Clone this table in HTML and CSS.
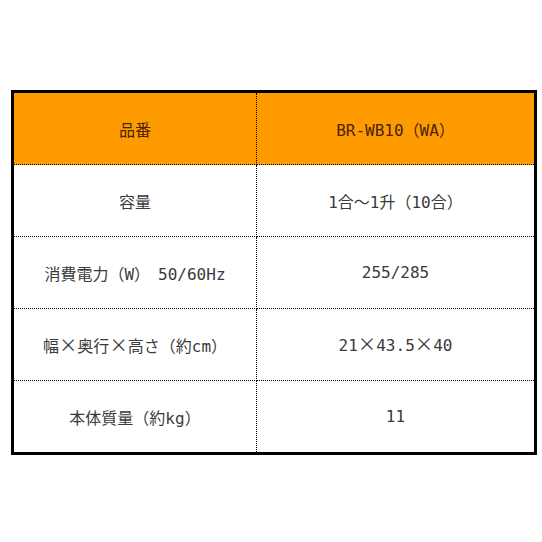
FILE: index.html
```html
<!DOCTYPE html>
<html lang="ja">
<head>
<meta charset="utf-8">
<link rel="stylesheet" href="styles.css">
</head>
<body>
<table class="spec">
  <tr class="head"><td class="c1">品番</td><td class="c2">BR-WB10（WA）</td></tr>
  <tr><td class="c1">容量</td><td class="c2">1合～1升（10合）</td></tr>
  <tr><td class="c1">消費電力（W）　50/60Hz</td><td class="c2">255/285</td></tr>
  <tr><td class="c1">幅<span class="x">×</span>奥行<span class="x">×</span>高さ（約cm）</td><td class="c2">21<span class="x">×</span>43.5<span class="x">×</span>40</td></tr>
  <tr><td class="c1">本体質量（約kg）</td><td class="c2">11</td></tr>
</table>
</body>
</html>
```
FILE: styles.css
```css
html, body {
  margin: 0;
  background: #ffffff;
}
body {
  padding: 90px 0 0 11px;
}
.spec {
  border-collapse: collapse;
  width: 526px;
  border: 3px solid #000;
  font-family: "DejaVu Sans Mono", "Noto Sans CJK JP", monospace;
  font-size: 16px;
  color: #3a3a3a;
  table-layout: fixed;
}
.spec td {
  height: 71px;
  padding: 0;
  text-align: center;
  vertical-align: middle;
  border: 1px dotted #000;
}
.spec .c1 {
  width: 242px;
}
.head td {
  background: #fe9b00;
  color: #4a2500;
}
.x {
  display: inline-block;
  width: 1em;
  text-align: center;
  font-family: "Noto Sans CJK JP", sans-serif;
  font-size: 1.15em;
  line-height: 1;
}
```
